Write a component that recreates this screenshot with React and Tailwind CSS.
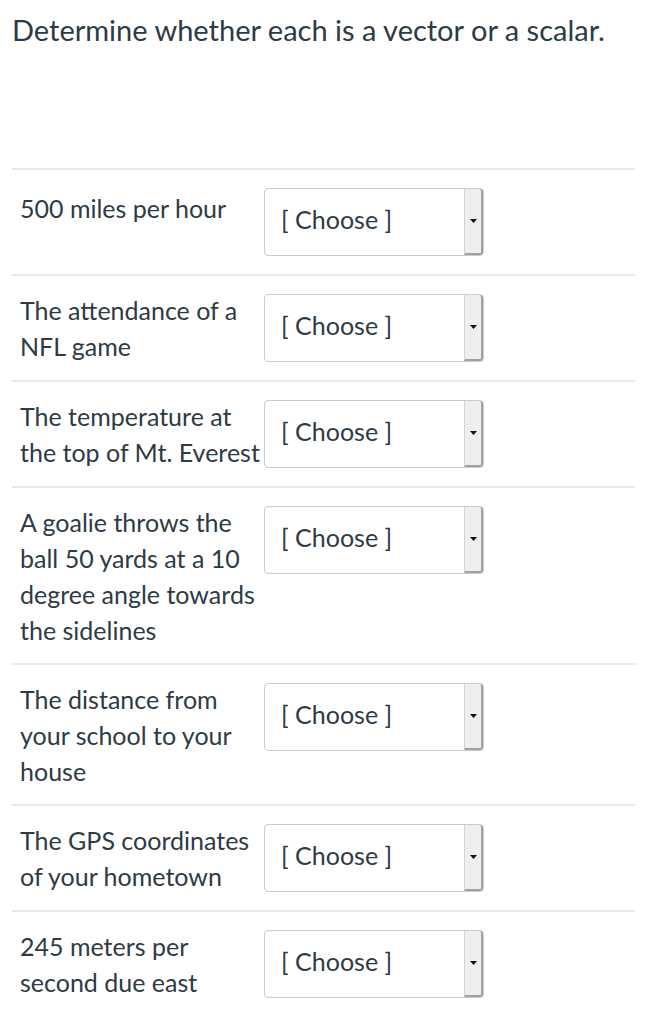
const items = [
  { lines: ['500 miles per hour'], first: true },
  { lines: ['The attendance of a', 'NFL game'] },
  { lines: ['The temperature at', 'the top of Mt. Everest'] },
  { lines: ['A goalie throws the', 'ball 50 yards at a 10', 'degree angle towards', 'the sidelines'] },
  { lines: ['The distance from', 'your school to your', 'house'] },
  { lines: ['The GPS coordinates', 'of your hometown'] },
  { lines: ['245 meters per', 'second due east'] },
];

function ChooseSelect() {
  return (
    <div className="relative mt-[2px] mb-[3px] flex h-[68px] w-[220px] shrink-0 items-center rounded-[4px] border border-[#c7cdd1] bg-white">
      <span className="pl-[16px] pb-[4px] text-[25px] text-[#2d3b45]">[ Choose ]</span>
      <div className="absolute right-0 top-0 bottom-0 flex w-[19px] items-center justify-center rounded-r-[3px] border-l border-[#d4d4d4] border-r-2 border-b-2 border-r-[#a0a0a0] border-b-[#a0a0a0] bg-[#efefef]">
        <svg width="7" height="4" viewBox="0 0 7 4">
          <path d="M0 0 L7 0 L3.5 4 Z" fill="#111" />
        </svg>
      </div>
    </div>
  );
}

export default function App() {
  return (
    <div className="min-h-screen bg-white font-['Lato','Open_Sans',sans-serif] text-[#2d3b45]">
      <h1 className="px-[12px] pt-[10px] text-[29px] leading-[40px] font-normal">
        Determine whether each is a vector or a scalar.
      </h1>

      <div className="mx-[12px] mt-[118px]">
        {items.map((item, i) => (
          <div key={i} className="flex items-start border-t-2 border-[#e8e8e8] pt-[16px] pb-[15px] pl-[8px]">
            <div className={`w-[244px] shrink-0 text-[25px] leading-[36px] ${item.first ? 'pt-[4px]' : ''}`}>
              {item.lines.map((line) => (
                <div key={line} className="whitespace-nowrap">{line}</div>
              ))}
            </div>
            <ChooseSelect />
          </div>
        ))}
      </div>
    </div>
  );
}
